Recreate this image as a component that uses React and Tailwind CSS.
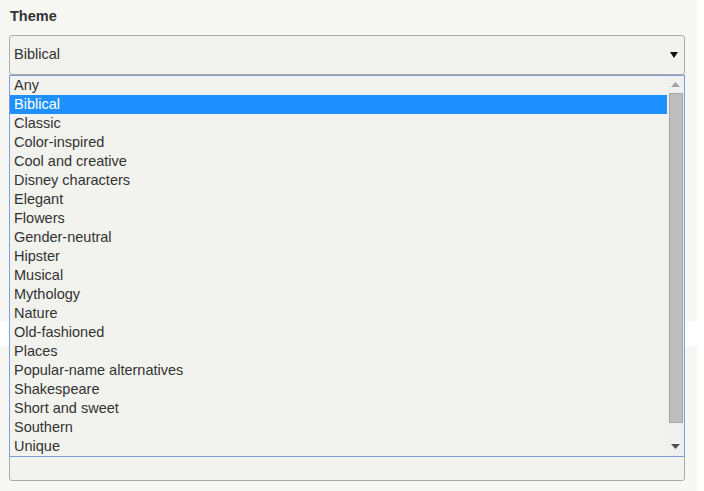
import React from "react";

const items = [
  "Any","Biblical","Classic","Color-inspired","Cool and creative","Disney characters","Elegant","Flowers","Gender-neutral","Hipster","Musical","Mythology","Nature","Old-fashioned","Places","Popular-name alternatives","Shakespeare","Short and sweet","Southern","Unique",
];

export default function App() {
  return (
    <div className="relative w-[704px] h-[491px] bg-white overflow-hidden" style={{ fontFamily: '"Liberation Sans", Arial, sans-serif' }}>
      <div className="w-[697px] flex flex-col gap-[25px]">
        <div className="h-[321px] bg-[#f7f7f3] pt-[7px] px-[9px]">
          <div className="pl-[1px] text-[14.5px] font-bold text-[#333] leading-[19px]">Theme</div>
          <div className="mt-[9px] w-[676px] h-[40px] rounded-[3px] border border-[#ababab] bg-[#f2f2ee] flex items-center justify-between pl-[4px] pr-[6px] text-[14.5px] text-[#333]">
            <span>Biblical</span>
            <svg width="8" height="6" viewBox="0 0 8 6"><path d="M0 0H8L4 6Z" fill="#111" /></svg>
          </div>
        </div>
        <div className="h-[145px] bg-[#f7f7f3] px-[9px] pt-[95px]">
          <div className="w-[676px] h-[40px] rounded-[3px] border border-[#ababab] bg-[#f2f2ee]" />
        </div>
      </div>

      <div className="absolute left-[9px] top-[75px] w-[676px] h-[382px] border border-[#7d9fd8] bg-[#f2f2ee] flex">
        <div className="flex-1 flex flex-col text-[14.5px] text-[#333]">
          {items.map((it) => (
            <div
              key={it}
              className={
                "h-[19px] leading-[19px] pl-[4px] " +
                (it === "Biblical" ? "bg-[#1e90ff] text-white" : "")
              }
            >
              {it}
            </div>
          ))}
        </div>
        <div className="w-[17px] bg-[#f0f0ee] flex flex-col items-center">
          <div className="h-[17px] flex items-center justify-center">
            <svg width="9" height="5" viewBox="0 0 9 5"><path d="M4.5 0L9 5H0Z" fill="#a3a3a3" /></svg>
          </div>
          <div className="w-[14px] h-[330px] bg-[#bdbdbd] border border-[#a6a6a6]" />
          <div className="flex-1 flex items-end justify-center pb-[7px]">
            <svg width="9" height="5" viewBox="0 0 9 5"><path d="M0 0H9L4.5 5Z" fill="#505050" /></svg>
          </div>
        </div>
      </div>
    </div>
  );
}
